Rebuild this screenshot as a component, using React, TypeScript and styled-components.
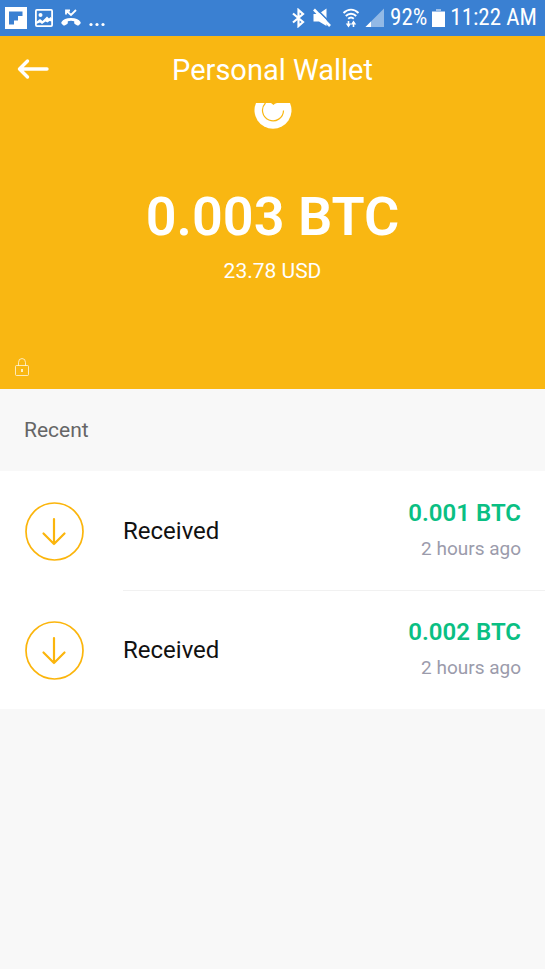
import React from "react";
import styled, { createGlobalStyle } from "styled-components";

const GlobalStyle = createGlobalStyle`
  * { box-sizing: border-box; }
  body {
    margin: 0;
    background: #f8f8f8;
    font-family: Roboto, "Liberation Sans", sans-serif;
  }
`;

const Page = styled.div`
  min-height: 100vh;
  display: flex;
  flex-direction: column;
`;

const StatusBar = styled.div`
  height: 36px;
  padding: 0 8px 0 5px;
  display: flex;
  align-items: center;
  justify-content: space-between;
  background: #3a80d2;
  color: #fff;
`;

const StatusGroup = styled.div<{ $gap: number }>`
  display: flex;
  align-items: center;
  gap: ${(p) => p.$gap}px;
`;

const StatusText = styled.span`
  font-family: "Roboto Condensed", Roboto, sans-serif;
  font-size: 23px;
  line-height: 28px;
  white-space: nowrap;
`;

const WalletPanel = styled.header`
  background: #f9b712;
  color: #fff;
  display: flex;
  flex-direction: column;
`;

const TitleBar = styled.div`
  height: 67px;
  padding: 0 16px;
  display: grid;
  grid-template-columns: 36px 1fr 36px;
  align-items: center;
`;

const BackButton = styled.button`
  height: 36px;
  padding: 0;
  border: 0;
  background: none;
  color: inherit;
  display: flex;
  align-items: center;
  cursor: pointer;
`;

const Title = styled.h1`
  margin: 0;
  font-size: 29px;
  line-height: 36px;
  font-weight: 400;
  text-align: center;
  white-space: nowrap;
`;

const Emblem = styled.div`
  display: flex;
  justify-content: center;
  height: 28px;
`;

const Balance = styled.div`
  margin-top: 52px;
  font-size: 54px;
  line-height: 68px;
  font-weight: 600;
  text-align: center;
`;

const Fiat = styled.div`
  margin-top: 8px;
  font-size: 21px;
  line-height: 24px;
  text-align: center;
`;

const PanelFooter = styled.div`
  margin-top: 70px;
  padding: 0 14px 12px;
  height: 36px;
  display: flex;
  align-items: flex-end;
`;

const SectionTitle = styled.h2`
  margin: 0;
  padding: 29px 24px;
  font-size: 21px;
  line-height: 24px;
  font-weight: 400;
  color: #666;
`;

const List = styled.ul`
  margin: 0;
  padding: 0;
  list-style: none;
  background: #fff;
`;

const Row = styled.li`
  display: flex;
  align-items: center;
  padding-left: 24px;
  gap: 39px;

  & + & > div {
    border-top: 1px solid #f1f1f1;
  }
`;

const RowBody = styled.div`
  flex: 1;
  min-height: 119px;
  padding-right: 24px;
  display: flex;
  align-items: center;
  justify-content: space-between;
`;

const Kind = styled.span`
  font-size: 24px;
  line-height: 32px;
  color: #111;
`;

const Figures = styled.span`
  display: flex;
  flex-direction: column;
  align-items: flex-end;
  gap: 8px;
  padding-bottom: 4px;
`;

const Amount = styled.span`
  font-size: 24px;
  line-height: 32px;
  font-weight: 600;
  color: #0abf83;
`;

const When = styled.span`
  font-size: 19px;
  line-height: 24px;
  color: #9b9bab;
`;

const NewsIcon = () => (
  <svg width="22" height="22" viewBox="0 0 22 22" aria-hidden="true">
    <path fill="#fff" d="M0 0h22v22H0z" />
    <path fill="#3a80d2" d="M4 4.500h13.500v4.500h-4.500v4.500H9v4H4z" />
  </svg>
);

const PictureIcon = () => (
  <svg width="18" height="18" viewBox="0 0 18 18" aria-hidden="true">
    <rect x=".9" y=".9" width="16.200" height="16.200" rx="1" fill="none" stroke="#fff" strokeWidth="1.800" />
    <circle cx="5.500" cy="6" r="2" fill="#fff" />
    <path fill="#fff" d="M1 13l4-3 2.500 2L12 7.500l2 2L15.500 8 17 9.500v3l-2.500-.5-2 1.500-2-1L7 15l-2-1.500L1 15z" />
  </svg>
);

const MissedCallIcon = () => (
  <svg width="20" height="18" viewBox="0 0 20 18" aria-hidden="true">
    <path d="M5 5.500V1.500h4M5 1.500l5 4.500 5-5" fill="none" stroke="#fff" strokeWidth="1.800" />
    <path fill="#fff" d="M10 9c-4.500 0-8 1.600-9.500 4-.4.700-.3 1.300.2 1.800l1.500 1.500c.4.400 1 .4 1.500.1l2.500-1.500c.4-.3.600-.6.600-1.100v-1.500c2-.7 4.400-.7 6.400 0v1.500c0 .5.2.8.6 1.100l2.500 1.500c.5.300 1.100.3 1.500-.1l1.500-1.500c.5-.5.600-1.100.2-1.800C18 10.600 14.500 9 10 9z" />
  </svg>
);

const MoreIcon = () => (
  <svg width="16" height="18" viewBox="0 0 16 18" fill="#fff" aria-hidden="true">
    <circle cx="2" cy="15.500" r="1.600" />
    <circle cx="8" cy="15.500" r="1.600" />
    <circle cx="14" cy="15.500" r="1.600" />
  </svg>
);

const BluetoothIcon = () => (
  <svg width="13" height="20" viewBox="0 0 13 20" aria-hidden="true">
    <path d="M1 5.500l10 8.500-4.500 4V2L11 6 1 14.500" fill="none" stroke="#fff" strokeWidth="2.200" />
  </svg>
);

const MutedIcon = () => (
  <svg width="18" height="20" viewBox="0 0 18 20" aria-hidden="true">
    <path fill="#fff" d="M.5 6h5L13.500.5v17.500L6 13.500H.5z" />
    <path d="M2.500 0l16 16" stroke="#3a80d2" strokeWidth="1.600" />
    <path d="M1 1.500l16 16.500" stroke="#fff" strokeWidth="2.600" />
  </svg>
);

const WifiIcon = () => (
  <svg width="18" height="20" viewBox="0 0 18 20" fill="none" stroke="#fff" aria-hidden="true">
    <path d="M1.500 5C6 .5 12 .5 16.500 5M3.800 8c3-3 7.400-3 10.400 0M6.200 10.800c1.700-1.600 3.900-1.600 5.600 0" strokeWidth="1.900" />
    <path d="M6.500 13v4M11.500 19v-4" strokeWidth="1.600" />
    <path d="M3.800 15.500h5.400l-2.700 4zM8.800 16.500h5.400l-2.700-4z" fill="#fff" stroke="none" />
  </svg>
);

const SignalIcon = () => (
  <svg width="19" height="20" viewBox="0 0 19 20" aria-hidden="true">
    <path fill="#fff" opacity=".45" d="M19 .5v18.500H.5z" />
    <path fill="#fff" d="M6 13.500V19H.5z" />
  </svg>
);

const BatteryIcon = () => (
  <svg width="13" height="20" viewBox="0 0 13 20" aria-hidden="true">
    <path fill="#9dbfe9" d="M4 1h5v2h4v2H0V3h4z" />
    <path fill="#fff" d="M0 4h13v15H0z" />
  </svg>
);

const BackIcon = () => (
  <svg width="36" height="24" viewBox="0 0 36 24" fill="none" stroke="#fff" strokeWidth="3.400" strokeLinecap="round" strokeLinejoin="round" aria-hidden="true">
    <path d="M31 11H4M11.500 3L3.500 11l8 8" />
  </svg>
);

const EmblemIcon = () => (
  <svg width="38" height="28" viewBox="0 0 38 28" aria-hidden="true">
    <path fill="#fff" d="M2 0h34A18.500 18.500 0 1 1 2 0z" />
    <path d="M11.500 0A10.500 10.500 0 1 0 29.500 7.500" fill="none" stroke="#f9b712" strokeWidth="1.200" />
    <path fill="#f9b712" d="M17 0h6q-2.500.4-3.500 2z" />
  </svg>
);

const LockIcon = () => (
  <svg width="16" height="19" viewBox="0 0 16 19" fill="none" stroke="#fff" aria-hidden="true">
    <rect x="1.500" y="7.500" width="13" height="10" rx="1" opacity=".7" />
    <path d="M4.500 7.500V4.500a3.500 4 0 0 1 7 0v3" opacity=".7" />
    <path d="M8 11v3" strokeWidth="1.500" />
  </svg>
);

const ReceivedIcon = () => (
  <svg width="60" height="60" viewBox="0 0 60 60" fill="none" stroke="#fbb50c" aria-hidden="true">
    <circle cx="30.500" cy="30.500" r="28.500" strokeWidth="1.700" />
    <path d="M30 18v25M19.500 32.500L30 43l10.500-10.500" strokeWidth="2.200" strokeLinecap="round" strokeLinejoin="round" />
  </svg>
);

const transactions = [
  { id: 1, amount: "0.001 BTC", when: "2 hours ago" },
  { id: 2, amount: "0.002 BTC", when: "2 hours ago" },
];

export default function App() {
  return (
    <Page>
      <GlobalStyle />
      <StatusBar>
        <StatusGroup $gap={8}>
          <NewsIcon />
          <PictureIcon />
          <MissedCallIcon />
          <MoreIcon />
        </StatusGroup>
        <StatusGroup $gap={6}>
          <StatusGroup $gap={11}>
            <StatusGroup $gap={8}>
              <BluetoothIcon />
              <MutedIcon />
            </StatusGroup>
            <StatusGroup $gap={5}>
              <WifiIcon />
              <SignalIcon />
            </StatusGroup>
          </StatusGroup>
          <StatusGroup $gap={5}>
            <StatusText>92%</StatusText>
            <BatteryIcon />
            <StatusText>11:22 AM</StatusText>
          </StatusGroup>
        </StatusGroup>
      </StatusBar>
      <WalletPanel>
        <TitleBar>
          <BackButton type="button" aria-label="Back">
            <BackIcon />
          </BackButton>
          <Title>Personal Wallet</Title>
        </TitleBar>
        <Emblem>
          <EmblemIcon />
        </Emblem>
        <Balance>0.003 BTC</Balance>
        <Fiat>23.78 USD</Fiat>
        <PanelFooter>
          <LockIcon />
        </PanelFooter>
      </WalletPanel>
      <main>
        <SectionTitle>Recent</SectionTitle>
        <List>
          {transactions.map((t) => (
            <Row key={t.id}>
              <ReceivedIcon />
              <RowBody>
                <Kind>Received</Kind>
                <Figures>
                  <Amount>{t.amount}</Amount>
                  <When>{t.when}</When>
                </Figures>
              </RowBody>
            </Row>
          ))}
        </List>
      </main>
    </Page>
  );
}
